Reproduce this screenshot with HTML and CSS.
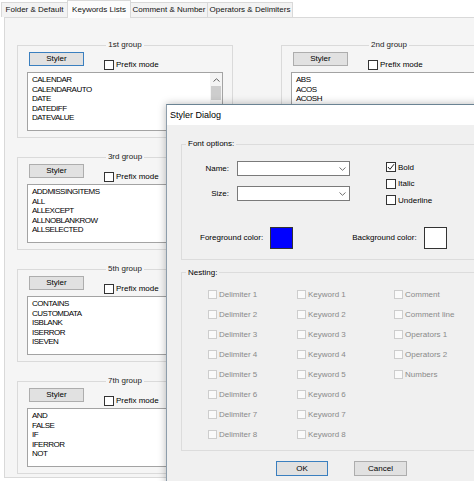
FILE: index.html
```html
<!DOCTYPE html>
<html>
<head>
<meta charset="utf-8">
<title>Keywords Lists</title>
<link rel="stylesheet" href="styles.css">
</head>
<body>
<div class="screen">
  <div class="tabs">
    <div class="tab t1">Folder &amp; Default</div>
    <div class="tab t2 active">Keywords Lists</div>
    <div class="tab t3">Comment &amp; Number</div>
    <div class="tab t4">Operators &amp; Delimiters</div>
  </div>
  <div class="page">
    <div class="groups">
      <fieldset class="group g1">
        <legend>1st group</legend>
        <div class="head">
          <button class="btn styler focus">Styler</button>
          <label class="check"><span class="box"></span>Prefix mode</label>
        </div>
        <div class="list">
          <ul class="items">
            <li>CALENDAR</li><li>CALENDARAUTO</li><li>DATE</li><li>DATEDIFF</li><li>DATEVALUE</li>
          </ul>
          <div class="vscroll">
            <div class="sb-up"><svg width="7" height="4" viewBox="0 0 7 4"><polyline points="0.5,3.5 3.5,0.8 6.5,3.5" fill="none" stroke="#606060" stroke-width="1"/></svg></div>
            <div class="thumb"></div>
          </div>
        </div>
      </fieldset>
      <fieldset class="group g2">
        <legend>2nd group</legend>
        <div class="head">
          <button class="btn styler">Styler</button>
          <label class="check"><span class="box"></span>Prefix mode</label>
        </div>
        <div class="list">
          <ul class="items">
            <li>ABS</li><li>ACOS</li><li>ACOSH</li><li>ACOT</li><li>ACOTH</li>
          </ul>
        </div>
      </fieldset>
      <fieldset class="group g3">
        <legend>3rd group</legend>
        <div class="head">
          <button class="btn styler">Styler</button>
          <label class="check"><span class="box"></span>Prefix mode</label>
        </div>
        <div class="list">
          <ul class="items">
            <li>ADDMISSINGITEMS</li><li>ALL</li><li>ALLEXCEPT</li><li>ALLNOBLANKROW</li><li>ALLSELECTED</li>
          </ul>
        </div>
      </fieldset>
      <fieldset class="group g5">
        <legend>5th group</legend>
        <div class="head">
          <button class="btn styler">Styler</button>
          <label class="check"><span class="box"></span>Prefix mode</label>
        </div>
        <div class="list">
          <ul class="items">
            <li>CONTAINS</li><li>CUSTOMDATA</li><li>ISBLANK</li><li>ISERROR</li><li>ISEVEN</li>
          </ul>
        </div>
      </fieldset>
      <fieldset class="group g7">
        <legend>7th group</legend>
        <div class="head">
          <button class="btn styler">Styler</button>
          <label class="check"><span class="box"></span>Prefix mode</label>
        </div>
        <div class="list">
          <ul class="items">
            <li>AND</li><li>FALSE</li><li>IF</li><li>IFERROR</li><li>NOT</li>
          </ul>
        </div>
      </fieldset>
    </div>
  </div>

  <div class="dialog">
    <div class="dlg-title">Styler Dialog</div>
    <div class="dlg-body">
      <fieldset class="fo">
        <legend class="lg">Font options:</legend>
        <div class="fo-top">
          <div class="fo-fields">
            <span class="flabel">Name:</span>
            <div class="combo"><svg width="7" height="4" viewBox="0 0 7 4"><polyline points="0.5,0.5 3.5,3.3 6.5,0.5" fill="none" stroke="#707070" stroke-width="1"/></svg></div>
            <span class="flabel">Size:</span>
            <div class="combo"><svg width="7" height="4" viewBox="0 0 7 4"><polyline points="0.5,0.5 3.5,3.3 6.5,0.5" fill="none" stroke="#707070" stroke-width="1"/></svg></div>
          </div>
          <div class="fo-styles">
            <label class="srow"><span class="box checked"><svg width="8" height="8" viewBox="0 0 8 8"><polyline points="1,4 3,6.3 7,1.2" fill="none" stroke="#222" stroke-width="1"/></svg></span>Bold</label>
            <label class="srow"><span class="box"></span>Italic</label>
            <label class="srow"><span class="box"></span>Underline</label>
          </div>
        </div>
        <div class="fo-colors">
          <span>Foreground color:</span>
          <span class="swatch blue"></span>
          <span class="bg-label">Background color:</span>
          <span class="swatch white"></span>
        </div>
      </fieldset>
      <fieldset class="nest">
        <legend class="lg">Nesting:</legend>
        <div class="ngrid">
          <label class="ncheck"><span class="nbox"></span>Delimiter 1</label>
          <label class="ncheck"><span class="nbox"></span>Delimiter 2</label>
          <label class="ncheck"><span class="nbox"></span>Delimiter 3</label>
          <label class="ncheck"><span class="nbox"></span>Delimiter 4</label>
          <label class="ncheck"><span class="nbox"></span>Delimiter 5</label>
          <label class="ncheck"><span class="nbox"></span>Delimiter 6</label>
          <label class="ncheck"><span class="nbox"></span>Delimiter 7</label>
          <label class="ncheck"><span class="nbox"></span>Delimiter 8</label>
          <label class="ncheck"><span class="nbox"></span>Keyword 1</label>
          <label class="ncheck"><span class="nbox"></span>Keyword 2</label>
          <label class="ncheck"><span class="nbox"></span>Keyword 3</label>
          <label class="ncheck"><span class="nbox"></span>Keyword 4</label>
          <label class="ncheck"><span class="nbox"></span>Keyword 5</label>
          <label class="ncheck"><span class="nbox"></span>Keyword 6</label>
          <label class="ncheck"><span class="nbox"></span>Keyword 7</label>
          <label class="ncheck"><span class="nbox"></span>Keyword 8</label>
          <label class="ncheck"><span class="nbox"></span>Comment</label>
          <label class="ncheck"><span class="nbox"></span>Comment line</label>
          <label class="ncheck"><span class="nbox"></span>Operators 1</label>
          <label class="ncheck"><span class="nbox"></span>Operators 2</label>
          <label class="ncheck"><span class="nbox"></span>Numbers</label>
        </div>
      </fieldset>
      <div class="dlg-buttons">
        <button class="btn ok focus">OK</button>
        <button class="btn cancel">Cancel</button>
      </div>
    </div>
  </div>
</div>
</body>
</html>
```
FILE: styles.css
```css
* { box-sizing: border-box; }
html, body { margin: 0; padding: 0; }
body {
  background: #fff;
  font-family: "Liberation Sans", Arial, sans-serif;
  font-size: 8px;
  color: #000;
}
.screen {
  position: relative;
  width: 474px;
  height: 481px;
  overflow: hidden;
  background: #fff;
}

/* tabs */
.tabs {
  display: flex;
  align-items: flex-end;
  height: 17px;
  padding-left: 1px;
  position: relative;
  z-index: 1;
}
.tab {
  height: 15px;
  line-height: 13px;
  border: 1px solid #d9d9d9;
  border-bottom: none;
  background: #f3f3f3;
  text-align: center;
  white-space: nowrap;
  margin-right: -1px;
  color: #111;
}
.tab.active {
  height: 18px;
  line-height: 17px;
  margin-bottom: -1px;
  background: #fcfcfc;
}
.t1 { width: 67px; }
.t2 { width: 64px; }
.t3 { width: 78px; }
.t4 { width: 86px; }

/* page */
.page {
  margin-left: 4px;
  height: 461px;
  border: 1px solid #d9d9d9;
  border-right: none;
  background: #f5f5f5;
  padding: 22px 0 0 12px;
}
.groups {
  display: grid;
  grid-template-columns: 216px 216px;
  column-gap: 48px;
  row-gap: 14px;
  align-items: start;
}
.g1 { grid-column: 1; grid-row: 1; }
.g2 { grid-column: 2; grid-row: 1; }
.g3 { grid-column: 1; grid-row: 2; }
.g5 { grid-column: 1; grid-row: 3; }
.g7 { grid-column: 1; grid-row: 4; }

fieldset.group {
  margin: 0;
  min-width: 0;
  padding: 2px 9px 6px;
  border: 1px solid #dadada;
}
fieldset.group legend {
  margin: 0 auto;
  padding: 0 2px;
  line-height: 10px;
  font-size: 8px;
  color: #222;
}
.head {
  display: flex;
  height: 18px;
}
.btn {
  font-family: "Liberation Sans", Arial, sans-serif;
  font-size: 8px;
  color: #000;
  background: #e1e1e1;
  border: 1px solid #adadad;
  padding: 0;
  text-align: center;
}
.styler {
  width: 55px;
  height: 14px;
  line-height: 12px;
  margin-left: 2px;
}
.btn.focus { border-color: #3a7fbf; }
.check {
  display: flex;
  align-items: center;
  gap: 2px;
  align-self: flex-end;
  margin-left: 20px;
  height: 10px;
  line-height: 10px;
  white-space: nowrap;
}
.box {
  flex: none;
  width: 10px;
  height: 10px;
  border: 1px solid #333;
  background: #fff;
  display: flex;
  align-items: center;
  justify-content: center;
}
.list {
  margin-top: 2px;
  height: 59px;
  border: 1px solid #a3a3a3;
  background: #fff;
  display: flex;
  overflow: hidden;
}
.items {
  flex: 1;
  list-style: none;
  margin: 0;
  padding: 2px 0 0 4px;
  line-height: 9.5px;
  font-size: 8px;
  letter-spacing: -0.5px;
  white-space: nowrap;
  overflow: hidden;
}
.vscroll {
  flex: none;
  width: 12px;
  display: flex;
  flex-direction: column;
  align-items: center;
  background: #f4f4f4;
}
.sb-up {
  height: 13px;
  display: flex;
  align-items: center;
  justify-content: center;
}
.thumb {
  width: 10px;
  height: 14px;
  background: #cdcdcd;
}

/* dialog */
.dialog {
  position: absolute;
  left: 166px;
  top: 104px;
  width: 330px;
  height: 400px;
  background: #f0f0f0;
  border: 1px solid #8d9dab;
  border-top-color: #6a8393;
  box-shadow: 0 0 8px rgba(0, 0, 0, 0.28);
}
.dlg-title {
  height: 20px;
  background: #fff;
  padding-left: 3px;
  display: flex;
  align-items: center;
  font-size: 9px;
}
.dlg-body {
  padding: 14px 14px 0 14px;
}
fieldset.fo, fieldset.nest {
  margin: 0;
  min-width: 0;
  border: 1px solid #dcdcdc;
  padding: 12px 0 10px 0;
}
legend.lg {
  margin-left: 4px;
  padding: 0 2px;
  line-height: 10px;
  font-size: 8px;
}
.fo-top {
  display: flex;
  align-items: flex-start;
}
.fo-fields {
  display: grid;
  grid-template-columns: 40px 113px;
  column-gap: 8px;
  row-gap: 10px;
  align-items: center;
  margin-left: 7px;
}
.flabel { text-align: right; }
.combo {
  height: 15px;
  background: #fff;
  border: 1px solid #7a7a7a;
  display: flex;
  align-items: center;
  justify-content: flex-end;
  padding-right: 3px;
}
.fo-styles {
  display: flex;
  flex-direction: column;
  margin-left: 36px;
  margin-top: -2px;
}
.srow {
  display: flex;
  align-items: center;
  gap: 2px;
  height: 16.5px;
  white-space: nowrap;
}
.fo-colors {
  display: flex;
  align-items: center;
  margin-top: 18px;
  padding-left: 18px;
  white-space: nowrap;
}
.swatch {
  flex: none;
  width: 23px;
  height: 22px;
  margin-left: 7px;
  border: 1px solid #333;
}
.swatch.blue { background: #0000ff; }
.swatch.white { background: #fff; }
.bg-label { margin-left: 59px; }

fieldset.nest {
  margin-top: 8px;
  padding: 7px 0 5px 0;
}
.ngrid {
  margin-left: 26px;
  display: grid;
  grid-template-rows: repeat(8, 20px);
  grid-auto-flow: column;
  grid-template-columns: 89px 97px 80px;
}
.ncheck {
  display: flex;
  align-items: center;
  gap: 2px;
  color: #8a8a8a;
  white-space: nowrap;
}
.nbox {
  flex: none;
  width: 9px;
  height: 9px;
  border: 1px solid #cdcdcd;
  background: #fafafa;
}
.dlg-buttons {
  display: flex;
  gap: 26px;
  margin-top: 10px;
  padding-left: 95px;
}
.dlg-buttons .btn {
  height: 15px;
  line-height: 13px;
}
.ok { width: 52px; }
.cancel { width: 53px; }
```
